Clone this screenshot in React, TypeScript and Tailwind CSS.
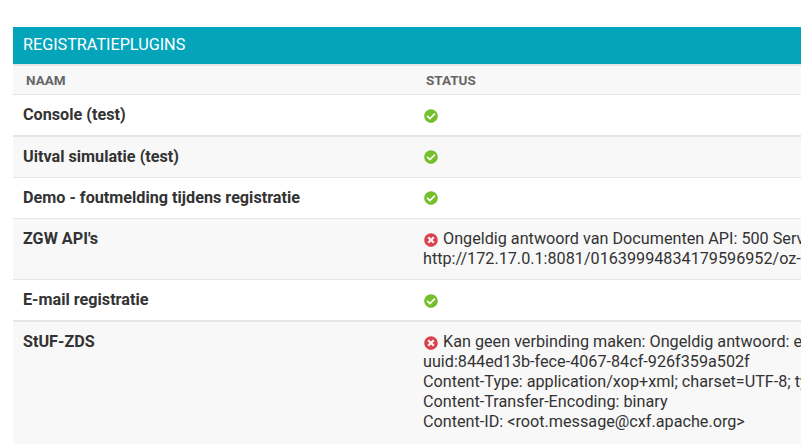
import { FaCheckCircle, FaTimesCircle } from 'react-icons/fa';

type Plugin = {
    name: string;
    ok: boolean;
    border: string;
    iconTop?: string;
    lines?: string[];
};

const plugins: Plugin[] = [
    { name: "Console (test)", ok: true, border: "border-b-2", iconTop: "mt-1" },
    { name: "Uitval simulatie (test)", ok: true, border: "border-b", iconTop: "mt-[3px]" },
    { name: "Demo - foutmelding tijdens registratie", ok: true, border: "border-b", iconTop: "mt-[3px]" },
    {
        name: "ZGW API's",
        ok: false,
        border: "border-b",
        lines: [
            "Ongeldig antwoord van Documenten API: 500 Server Error",
            "http://172.17.0.1:8081/01639994834179596952/oz-documenten",
        ],
    },
    { name: "E-mail registratie", ok: true, border: "border-b-2", iconTop: "mt-1" },
    {
        name: "StUF-ZDS",
        ok: false,
        border: "border-b",
        lines: [
            "Kan geen verbinding maken: Ongeldig antwoord: error",
            "uuid:844ed13b-fece-4067-84cf-926f359a502f",
            "Content-Type: application/xop+xml; charset=UTF-8; type=text/xml",
            "Content-Transfer-Encoding: binary",
            "Content-ID: <root.message@cxf.apache.org>",
            "",
        ],
    },
];

const App = () => {
    return (
        <div className="h-[444px] w-[801px] overflow-hidden bg-white pl-[13px] pt-[27px] font-['Roboto',sans-serif] text-[16.2px] leading-5 text-[#333333]">
            <div className="w-[1200px]">
                <div className="flex h-[37px] items-center bg-[#04a5bb] px-2.5 pb-0.5 text-white">
                    REGISTRATIEPLUGINS
                </div>
                <table className="w-full table-fixed border-separate border-spacing-0">
                    <thead>
                        <tr className="bg-[#f8f8f8] text-left text-[13.5px] text-[#666666]">
                            <th className="h-[31px] w-[400px] border-t-2 border-b border-[#e5e5e5] px-[13px] font-bold">NAAM</th>
                            <th className="h-[31px] border-t-2 border-b border-[#e5e5e5] px-[13px] font-bold">STATUS</th>
                        </tr>
                    </thead>
                    <tbody>
                        {plugins.map((plugin, i) => (
                            <tr key={plugin.name} className={`align-top ${i % 2 === 1 ? 'bg-[#f8f8f8]' : 'bg-white'}`}>
                                <td className={`${plugin.border} border-[#e5e5e5] p-2.5 font-bold`}>{plugin.name}</td>
                                <td className={`${plugin.border} border-[#e5e5e5] whitespace-nowrap p-2.5`}>
                                    {plugin.lines ? (
                                        plugin.lines.map((line, j) => (
                                            <div key={j} className="min-h-5">
                                                {j === 0 && <FaTimesCircle className="mr-[5px] ml-px inline-block size-3.5 align-[-3px] text-[#d9434e]" />}
                                                {line}
                                            </div>
                                        ))
                                    ) : (
                                        <FaCheckCircle className={`${plugin.iconTop} ml-px size-3.5 text-[#74bf2b]`} />
                                    )}
                                </td>
                            </tr>
                        ))}
                    </tbody>
                </table>
            </div>
        </div>
    );
};

export default App;
